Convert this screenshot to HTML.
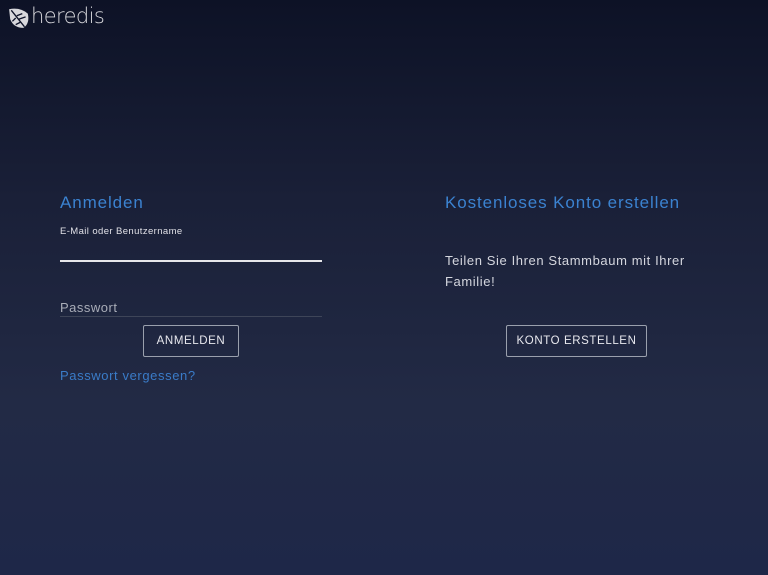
<!DOCTYPE html>
<html><head><meta charset="utf-8"><style>
*{margin:0;padding:0;box-sizing:border-box}
body{width:768px;height:575px;overflow:hidden;background:linear-gradient(180deg,#0d1226 0%,#1a2038 35%,#222a45 70%,#1e2748 100%);font-family:"Liberation Sans",sans-serif;position:relative;color:#dde}
.a{position:absolute}
h2{font-weight:normal;font-size:17px;color:#3b82d0;position:absolute;letter-spacing:0.9px}
.btn{position:absolute;border:1px solid #9aa0ad;border-radius:2px;color:#e8e8ee;font-size:11.5px;text-align:center;line-height:30px;letter-spacing:.6px}
</style></head><body>
<svg class="a" style="left:8px;top:7px" width="22" height="22" viewBox="0 0 20 20"><path d="M1 2 Q11 0 18 6 Q20 15 14 19 Q5 19 2 11 Z" fill="#d8d8dc"/><path d="M3 3 L15 18 M8 8 L13 6 M10 11 L16 9 M7 10 L4 13 M11 14 L7 16" stroke="#0e1328" stroke-width="1.2" fill="none"/></svg>
<div class="a" style="left:31px;top:4px;font-family:'DejaVu Sans',sans-serif;font-weight:200;font-size:21px;color:#d8d8dc;letter-spacing:-0.6px">heredis</div>
<h2 style="left:60px;top:193px">Anmelden</h2>
<div class="a" style="left:60px;top:226px;font-size:9.5px;color:#e0e0e6;letter-spacing:0.4px">E-Mail oder Benutzername</div>
<div class="a" style="left:60px;top:260px;width:262px;height:2px;background:#e6e6ea"></div>
<div class="a" style="left:60px;top:300px;font-size:13px;color:#a9adb8;letter-spacing:0.5px">Passwort</div>
<div class="a" style="left:60px;top:316px;width:262px;height:1px;background:#3e4558"></div>
<div class="btn" style="left:143px;top:325px;width:96px;height:32px">ANMELDEN</div>
<div class="a" style="left:60px;top:368px;font-size:13px;color:#3a7bc8;letter-spacing:0.6px">Passwort vergessen?</div>
<h2 style="left:445px;top:193px">Kostenloses Konto erstellen</h2>
<div class="a" style="left:445px;top:250px;font-size:13px;line-height:21px;color:#d4d6de;width:265px;letter-spacing:0.6px">Teilen Sie Ihren Stammbaum mit Ihrer Familie!</div>
<div class="btn" style="left:506px;top:325px;width:141px;height:32px">KONTO ERSTELLEN</div>
</body></html>
